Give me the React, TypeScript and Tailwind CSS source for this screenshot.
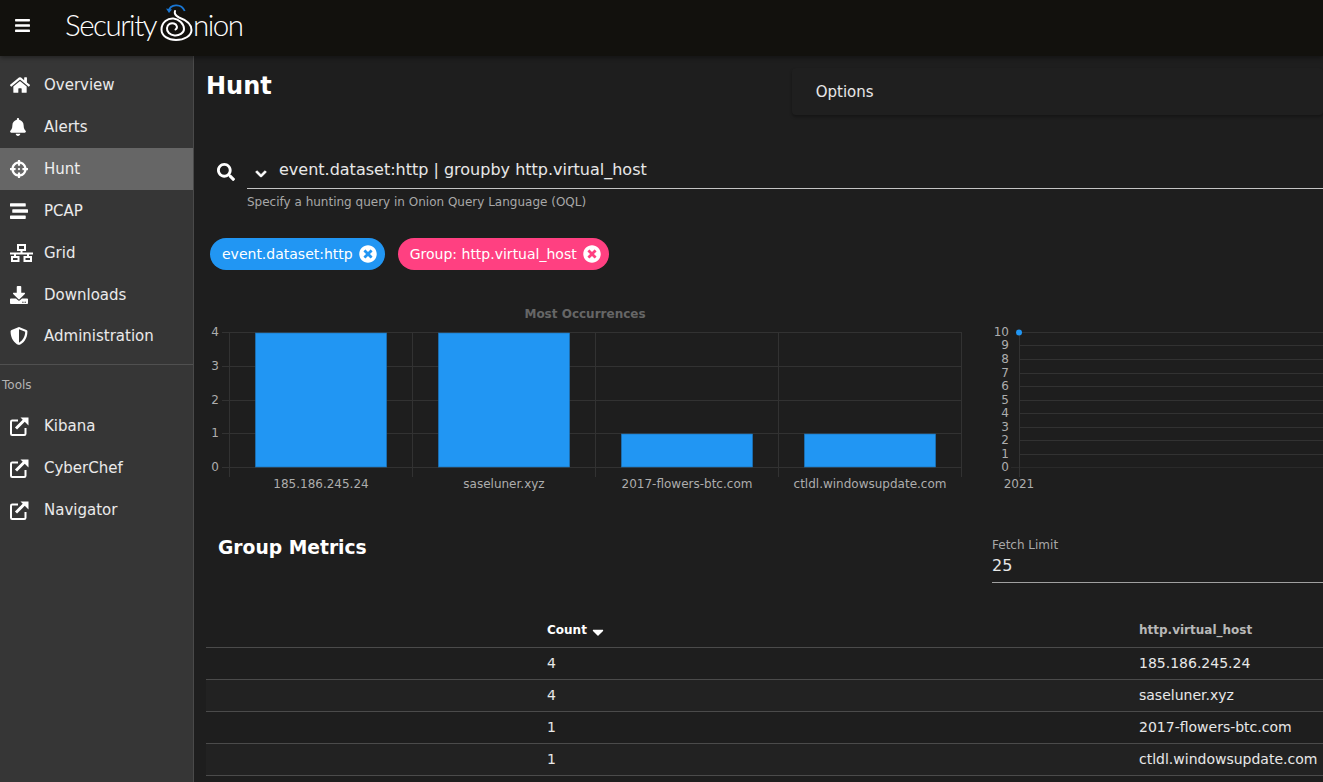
import React from "react";
import { FaBars, FaHome, FaBell, FaCrosshairs, FaStream, FaDownload, FaShieldAlt, FaSearch, FaChevronDown, FaTimesCircle, FaCaretDown } from "react-icons/fa";

const GridIcon = () => (
  <svg width="23" height="18" viewBox="0 0 23 18" fill="none" stroke="white" strokeWidth="2">
    <rect x="8" y="1" width="7" height="5" />
    <path d="M0 9.5H23M11.5 6V9.5M5 9.5V13M18 9.5V13" />
    <rect x="2" y="13" width="6.5" height="4" />
    <rect x="14.5" y="13" width="6.5" height="4" />
  </svg>
);

const LinkIcon = () => (
  <svg width="19" height="19" viewBox="0 0 19 19" fill="none">
    <path d="M8 3.5H2.2C1.5 3.5 1 4 1 4.7V16.8C1 17.5 1.5 18 2.2 18H14.3C15 18 15.5 17.5 15.5 16.8V11" stroke="white" strokeWidth="2" />
    <path d="M6 11.5L15 2.5" stroke="white" strokeWidth="3" />
    <path d="M10.5 0.5H18.5V8.5Z" fill="white" />
  </svg>
);

const nav = [
  { label: "Overview", icon: <FaHome size={20} /> },
  { label: "Alerts", icon: <FaBell size={18} className="ml-[-1px]" /> },
  { label: "Hunt", icon: <FaCrosshairs size={18} />, active: true },
  { label: "PCAP", icon: <FaStream size={18} /> },
  { label: "Grid", icon: <GridIcon /> },
  { label: "Downloads", icon: <FaDownload size={18} /> },
  { label: "Administration", icon: <FaShieldAlt size={18} />, tight: true },
];

const tools = ["Kibana", "CyberChef", "Navigator"];

function NavRow({ label, icon, active, tight }: { label: string; icon: React.ReactNode; active?: boolean; tight?: boolean }) {
  return (
    <div className={`flex h-[42px] items-center pl-[10px] text-white/90 ${active ? "bg-[#666666]" : ""} ${tight ? "-mt-[1px]" : ""}`}>
      <span className="flex w-[34px] shrink-0 items-center text-white">{icon}</span>
      <span className="text-[15px] leading-none">{label}</span>
    </div>
  );
}

const GRID = "#323232";
const LABEL = "#adadad";

function BarChart() {
  const ys = [332, 366, 400, 433, 467];
  const xs = [229, 412, 595, 778, 961];
  const bars = [
    { x: 255, y: 333, label: "185.186.245.24" },
    { x: 438, y: 333, label: "saseluner.xyz" },
    { x: 621, y: 434, label: "2017-flowers-btc.com" },
    { x: 804, y: 434, label: "ctldl.windowsupdate.com" },
  ];
  return (
    <svg width="770" height="190" viewBox="206 305 770 190" className="shrink-0" fontFamily="'DejaVu Sans', sans-serif">
      <text x="585" y="318" textAnchor="middle" fontSize="12" fontWeight="700" fill="#666666">Most Occurrences</text>
      {ys.map((y, i) => (
        <g key={y}>
          <line x1="222" x2="962" y1={y + 0.5} y2={y + 0.5} stroke={GRID} />
          <text x="219" y={y + 3.6} textAnchor="end" fontSize="12" fill={LABEL}>{4 - i}</text>
        </g>
      ))}
      {xs.map((x) => (
        <line key={x} x1={x + 0.5} x2={x + 0.5} y1="332" y2="477" stroke={GRID} />
      ))}
      {bars.map((b) => (
        <g key={b.label}>
          <rect x={b.x + 0.3} y={b.y} width="131.4" height={467 - b.y} fill="#2196f3" stroke="#1b6cab" strokeWidth="0.6" />
          <text x={b.x + 66} y="488" textAnchor="middle" fontSize="12" fill={LABEL}>{b.label}</text>
        </g>
      ))}
    </svg>
  );
}

function LineChart() {
  const ys = [332, 345, 359, 373, 386, 400, 413, 427, 440, 454, 467];
  return (
    <svg width="360" height="190" viewBox="976 305 360 190" className="shrink-0" fontFamily="'DejaVu Sans', sans-serif">
      {ys.map((y, i) => (
        <g key={y}>
          <line x1={i === 10 ? 1011 : 1019} x2="1336" y1={y + 0.5} y2={y + 0.5} stroke={i === 10 ? "#2a2a2a" : GRID} />
          <text x="1009" y={y + 4} textAnchor="end" fontSize="12" fill={LABEL}>{10 - i}</text>
        </g>
      ))}
      <line x1="1019.5" x2="1019.5" y1="332" y2="477" stroke={GRID} />
      <circle cx="1019" cy="332.5" r="3" fill="#2196f3" />
      <text x="1019" y="488" textAnchor="middle" fontSize="12" fill={LABEL}>2021</text>
    </svg>
  );
}

function Chip({ label, color }: { label: string; color: string }) {
  return (
    <div className={`flex h-[32px] items-center rounded-full pl-[12px] pr-[8px] text-[14px] text-white ${color}`}>
      <span>{label}</span>
      <span className="ml-[6px] flex h-[18px] w-[18px] items-center justify-center">
        <FaTimesCircle size={18} color="white" />
      </span>
    </div>
  );
}

const rows = [
  ["4", "185.186.245.24"],
  ["4", "saseluner.xyz"],
  ["1", "2017-flowers-btc.com"],
  ["1", "ctldl.windowsupdate.com"],
];

export default function App() {
  return (
    <div className="flex h-[782px] w-[1323px] flex-col overflow-hidden bg-[#1e1e1e] font-['DejaVu_Sans',sans-serif] text-white">
      <header className="z-10 flex h-[56px] shrink-0 items-center bg-[#12110d] shadow-[0_2px_4px_rgba(0,0,0,0.35)]">
        <FaBars size={17} className="ml-[14px] -mt-[6px] text-white" />
        <div className="-mt-[7px] ml-[34px] flex items-center font-['Lato',sans-serif] text-[29.5px] font-light leading-none tracking-[-1.5px] text-white">
          <span>Security</span>
          <svg width="33" height="40" viewBox="0 0 33 40" fill="none" className="-my-[8px] ml-[4px] -mt-[12px]">
            <path d="M8.7 8C10 1.5 21 -0.5 24.7 8" stroke="#1976d2" strokeWidth="1.8" />
            <path d="M6 5.5L9 10L12 6.5Z" fill="#1976d2" />
            <path d="M15 8C14 11 16 13 19 14.5C26 17 31.5 21 31.5 27C31.5 33 24 37 16 37C8 37 1.5 33 1.5 26.5C1.5 19 8 15 13.5 15.5C19 16 24 21 24 26C24 30 19 33 14.5 32.5C10 32 6.5 29 7 25C7.5 21 11 19.5 14 20.5C17 21.5 18 25 15.5 26.5" stroke="white" strokeWidth="2" strokeLinecap="round" />
          </svg>
          <span>nion</span>
        </div>
      </header>

      <div className="flex min-h-0 flex-1">
        <aside className="w-[194px] shrink-0 border-r border-r-[#4a4a4a] bg-[#363636] pt-[8px]">
          {nav.map((n) => (
            <NavRow key={n.label} {...n} />
          ))}
          <div className="mt-[7px] border-t border-t-[#505050] pl-[2px] pt-[13px] text-[12px] leading-[14px] text-[#b4b4b4]">Tools</div>
          <div className="mt-[13px]">
            {tools.map((t) => (
              <NavRow key={t} label={t} icon={<LinkIcon />} />
            ))}
          </div>
        </aside>

        <main className="min-w-0 flex-1 overflow-hidden">
          <div className="flex h-[59px] items-start pl-[12px]">
            <h1 className="mt-[14px] text-[24px] font-bold leading-[32px]">Hunt</h1>
            <div className="ml-[520px] mt-[12px] flex h-[47px] flex-1 items-center rounded-[4px] bg-[#1f1f1f] pl-[24px] pt-[2px] text-[15px] text-white/90 shadow-[0_2px_3px_rgba(0,0,0,0.3)]">Options</div>
          </div>

          <div className="mt-[43px] flex pl-[23px]">
            <FaSearch size={18} className="mt-[5px] shrink-0 text-white" />
            <div className="ml-[12px] flex-1">
              <div className="flex h-[31px] border-b border-b-[#c4c4c4] text-[16px] leading-[20px] text-white/90">
                <FaChevronDown size={12} stroke="white" strokeWidth={40} className="ml-[8px] mt-[10px] shrink-0 text-white" />
                <span className="ml-[12px] mt-[2px]">event.dataset:http | groupby http.virtual_host</span>
              </div>
              <div className="mt-[6px] text-[12px] leading-[14px] text-[#a8a8a8]">Specify a hunting query in Onion Query Language (OQL)</div>
            </div>
          </div>

          <div className="mt-[29px] flex gap-[13px] pl-[16px]">
            <Chip label="event.dataset:http" color="bg-[#2196f3]" />
            <Chip label="Group: http.virtual_host" color="bg-[#ff4081]" />
          </div>

          <div className="mt-[35px] flex w-[1130px] pl-[12px]">
            <BarChart />
            <LineChart />
          </div>

          <div className="mt-[38px] flex h-[66px] items-start pl-[24px]">
            <h2 className="mt-[1px] w-[774px] text-[18.72px] font-bold leading-[28px]">Group Metrics</h2>
            <div className="mt-[5px] flex-1">
              <div className="text-[12px] leading-[14px] text-[#a8a8a8]">Fetch Limit</div>
              <div className="mt-[4px] h-[27px] border-b border-b-[#a0a0a0] text-[16px] leading-[20px] text-white/90">25</div>
            </div>
          </div>

          <table className="ml-[12px] mt-[14px] w-[1117px] table-fixed border-collapse">
            <colgroup>
              <col className="w-[341px]" />
              <col className="w-[592px]" />
              <col />
            </colgroup>
            <thead>
              <tr className="h-[34px] border-b border-b-[#4b4b4b] text-left text-[12px] font-bold">
                <th />
                <th className="text-white">
                  <span className="inline-flex items-center">Count<FaCaretDown size={18} className="ml-[2px] mt-[5px]" /></span>
                </th>
                <th className="text-[#b8b8b8]">http.virtual_host</th>
              </tr>
            </thead>
            <tbody>
              {rows.map(([c, h], i) => (
                <tr key={h} className={`h-[32px] border-b border-b-[#4b4b4b] text-[14px] text-white/90 ${i % 2 === 1 ? "bg-[#222222]" : ""}`}>
                  <td />
                  <td>{c}</td>
                  <td className="whitespace-nowrap">{h}</td>
                </tr>
              ))}
            </tbody>
          </table>
        </main>
      </div>
    </div>
  );
}
